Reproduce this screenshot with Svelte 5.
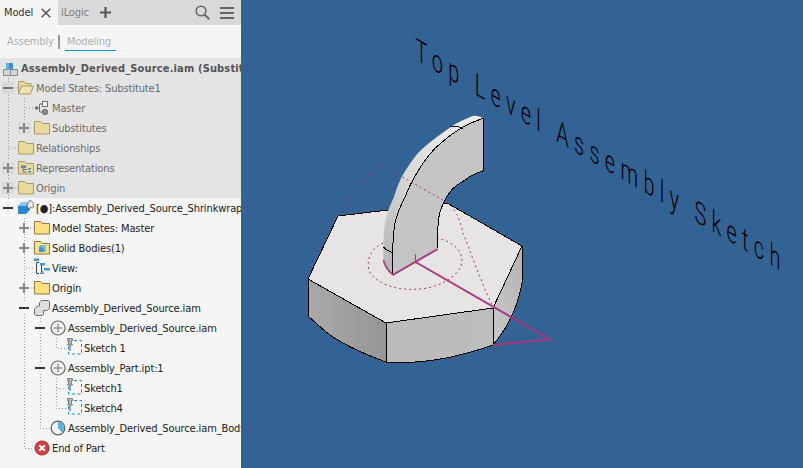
<script>
  const rows = [
    { level: -1, icon: 'asm', text: 'Assembly_Derived_Source.iam (Substitute1)', dim: true, root: true },
    { level: 0, toggle: 'minus', icon: 'open', text: 'Model States: Substitute1', dim: true, boxed: true },
    { level: 1, icon: 'state', text: 'Master', dim: true },
    { level: 1, toggle: 'plus', icon: 'folder', text: 'Substitutes', dim: true, boxed: true },
    { level: 0, icon: 'folder', text: 'Relationships', dim: true },
    { level: 0, toggle: 'plus', icon: 'reps', text: 'Representations', dim: true, boxed: true },
    { level: 0, toggle: 'plus', icon: 'folder', text: 'Origin', dim: true, boxed: true },
    { level: 0, toggle: 'minus', icon: 'part', text: '[●]:Assembly_Derived_Source_Shrinkwrap' },
    { level: 1, toggle: 'plus', icon: 'folder', text: 'Model States: Master' },
    { level: 1, toggle: 'plus', icon: 'solid', text: 'Solid Bodies(1)' },
    { level: 1, icon: 'view', text: 'View:' },
    { level: 1, toggle: 'plus', icon: 'folder', text: 'Origin' },
    { level: 1, toggle: 'minus', icon: 'derived', text: 'Assembly_Derived_Source.iam' },
    { level: 2, toggle: 'minus', icon: 'occ', text: 'Assembly_Derived_Source.iam' },
    { level: 3, icon: 'sketch', text: 'Sketch 1' },
    { level: 2, toggle: 'minus', icon: 'occ', text: 'Assembly_Part.ipt:1' },
    { level: 3, icon: 'sketch', text: 'Sketch1' },
    { level: 3, icon: 'sketch', text: 'Sketch4' },
    { level: 2, icon: 'body', text: 'Assembly_Derived_Source.iam_Body' },
    { level: 1, icon: 'end', text: 'End of Part' }
  ];
</script>

{#snippet folderShape(fill, edge)}
  <path d="M.5 14V1.500h6l2 2h7V14z" fill={fill} stroke={edge} />
{/snippet}

{#snippet icon(name, dim)}
  <svg class="ico" viewBox="0 0 16 16" width="16" height="16">
    {#if name === 'folder' || name === 'reps' || name === 'solid'}
      {@render folderShape(dim ? '#e9d99c' : '#fbe07f', dim ? '#ab9c6a' : '#8f7d43')}
      {#if name === 'reps'}
        <path d="M3 5.500h5v2.500H3zM10 8h3v1.600h-3zM10 11h3v1.600h-3z" fill="#5d86ad" />
        <path d="M5 8v4h3M5 9.500h4" fill="none" stroke="#66788c" />
      {/if}
      {#if name === 'solid'}
        <path d="M5 7l2-2h5v5l-2 2H5z" fill="#3f97d6" />
        <path d="M7 5h5v5H9.500V7.500H7z" fill="#7dc0ea" />
      {/if}
    {:else if name === 'open'}
      <path d="M.5 14V1.500h5.500l2 2h5v2" fill="#e9d99c" stroke="#ab9c6a" />
      <path d="M.5 14L3.500 6h12l-3 8z" fill="#efe2ae" stroke="#ab9c6a" />
    {:else if name === 'asm'}
      <path d="M.5 9.500h7v6h-7zM7.500 9.500h7v6h-7z" fill="#d6d6d6" stroke="#8b8b8b" />
      <path d="M3 3h7v6.500H3z" fill="#6aaee0" />
      <path d="M6 3h4v6.500H6z" fill="#3d8dc9" />
    {:else if name === 'state'}
      <rect x="8.500" y="1.500" width="5" height="5" fill="#fff" stroke="#6f6f6f" />
      <circle cx="11" cy="12" r="2.700" fill="#8c8c8c" stroke="#6f6f6f" />
      <path d="M8 4H5.500v8H8M5.500 8H1" fill="none" stroke="#6f6f6f" />
      <rect x="1" y="6.500" width="3" height="3" fill="#6f6f6f" />
    {:else if name === 'part'}
      <path d="M0 6l4-4h8v8l-4 4H0z" fill="#2d86cf" />
      <path d="M0 6l4-4h8l-4 4z" fill="#8cc7ef" />
      <path d="M9 5l3-5 4 3.500-1 1 .5 2.500-1 1-2.500-.5-1.500 1.500z" fill="#eee" stroke="#5c5c5c" stroke-width=".8" />
    {:else if name === 'view'}
      <path d="M5 2.500H2.500v11H5M7.500 4v8h2" fill="none" stroke="#444" />
      <rect x="0" y="-1.500" width="5" height="2.500" fill="#3d9ae0" />
      <rect x="6" y="3" width="5" height="2.500" fill="#3d9ae0" />
      <rect x="10" y="8" width="6" height="2.500" fill="#3d9ae0" />
      <rect x="6" y="12.500" width="4" height="1.500" fill="#3d9ae0" />
    {:else if name === 'derived'}
      <path d="M.5 9l3-3h2V2.500l2-2h7l1 1v7l-2 2h-4v4l-1 1H2l-1.500-1.500z" fill="#dedede" stroke="#6e6e6e" />
    {:else if name === 'occ'}
      <circle cx="8" cy="8" r="7" fill="#f5f5f5" stroke="#666" stroke-width="1.200" />
      <path d="M3.500 8h9M8 3.500v9" stroke="#666" fill="none" />
    {:else if name === 'sketch'}
      <rect x="2.500" y=".5" width="13" height="13.500" fill="none" stroke="#1f8ce0" stroke-dasharray="3 2.500" />
      <path d="M1.500-1.500h5v2H5.500v3l1 1.500h-5l1-1.500v-3h-1z" fill="#b5b5b5" stroke="#6d6d6d" stroke-width=".8" />
      <path d="M4 5v6" stroke="#555" />
    {:else if name === 'body'}
      <circle cx="8" cy="8" r="6.800" fill="#f2f2f2" stroke="#5d5d5d" stroke-width="1.200" />
      <path d="M8 2a6 6 0 0 1 6 6 6 6 0 0 1-2 4.400L8 8z" fill="#56b1e6" />
    {:else if name === 'end'}
      <circle cx="8" cy="8" r="7" fill="#dc3c3c" stroke="#b32222" />
      <path d="M5.200 5.200l5.600 5.600M10.800 5.200l-5.600 5.600" stroke="#fff" stroke-width="2.200" />
    {/if}
  </svg>
{/snippet}

<div class="app">
  <aside class="side">
    <div class="tabs">
      <div class="tab active">
        <span class="tname">Model</span>
        <svg class="x" viewBox="0 0 10 10" width="10" height="10"><path d="M.7.7l8.600 8.600M9.300.7L.7 9.300" stroke="#555" stroke-width="1.500" /></svg>
      </div>
      <div class="tab ilogic">iLogic</div>
      <svg class="plus" viewBox="0 0 10 10" width="11" height="11"><path d="M5 0v10M0 5h10" stroke="#555" stroke-width="2" /></svg>
      <div class="tools">
        <svg viewBox="0 0 15 15" width="15" height="15"><circle cx="6" cy="6" r="4.800" fill="none" stroke="#666" stroke-width="1.600" /><path d="M9.500 9.500l4.700 4.700" stroke="#666" stroke-width="2" /></svg>
        <svg viewBox="0 0 14 12" width="14" height="12"><path d="M0 1h14M0 6h14M0 11h14" stroke="#666" stroke-width="2" /></svg>
      </div>
    </div>
    <div class="views">
      <span class="vname">Assembly</span>
      <i class="sep"></i>
      <span class="cur">Modeling</span>
    </div>
    <div class="tree">
      {#each rows as r}
        <div class="row" class:dim={r.dim} class:root={r.root} style:padding-left={r.root ? '3px' : `${r.level * 16}px`}>
          {#if !r.root}
            <span class="tog" class:boxed={r.boxed}>
              {#if r.toggle}
                <svg viewBox="0 0 10 10" width="10" height="10">
                  <path d={r.toggle === 'plus' ? 'M0 5h10M5 0v10' : 'M0 5h10'} stroke={r.toggle === 'plus' ? '#888' : (r.dim ? '#777' : '#333')} stroke-width="2" />
                </svg>
              {/if}
            </span>
          {/if}
          {@render icon(r.icon, r.dim)}
          <span class="lbl">{r.text}</span>
        </div>
      {/each}
      <svg class="lines" viewBox="0 58 241 410" width="241" height="410">
        <g fill="none" stroke="#9c9c9c" stroke-dasharray="1 2">
          <path d="M8.500 78v5M8.500 95v66M8.500 175v6M8.500 195v6M14 88h4M14 168h4M14 188h4M9 148h9" />
          <path d="M24.500 98v24M26 108h8M30 128h4" />
          <path d="M24.500 218v4M24.500 234v8M24.500 254v28M24.500 294v8M24.500 314v134.500H34M30 228h4M30 248h4M26 268h8M30 288h4" />
          <path d="M40.500 318v4M40.500 334v28M40.500 374v54.500H50" />
          <path d="M56.500 338v10.500H66M56.500 378v30.500H66M56.500 388.500H66" />
        </g>
      </svg>
    </div>
  </aside>

  <main class="view">
    <svg viewBox="241 0 562 468" width="562" height="468">
      <defs>
        <linearGradient id="arch" gradientUnits="userSpaceOnUse" x1="386" y1="262" x2="440" y2="125">
          <stop offset="0" stop-color="#b8b8b8" />
          <stop offset=".3" stop-color="#c6c6c6" />
          <stop offset=".6" stop-color="#d8d8d8" />
          <stop offset="1" stop-color="#eaeaea" />
        </linearGradient>
        <linearGradient id="leftf" x1="0" y1="0" x2="1" y2="0">
          <stop offset="0" stop-color="#a9a9a9" />
          <stop offset="1" stop-color="#969696" />
        </linearGradient>
        <linearGradient id="midf" x1="0" y1="0" x2="1" y2="0">
          <stop offset="0" stop-color="#bcbcbc" />
          <stop offset="1" stop-color="#bdbdbd" />
        </linearGradient>
        <linearGradient id="rightf" x1="0" y1="1" x2="1" y2="0">
          <stop offset="0" stop-color="#c8c8c8" />
          <stop offset="1" stop-color="#b4b4b4" />
        </linearGradient>
      </defs>

      <text class="note" transform="matrix(.64 .37 0 1 415.500 59.700)" textLength="570" lengthAdjust="spacing">Top Level Assembly Sketch</text>

      <g stroke="#000" stroke-width="1" shape-rendering="crispEdges">
        <path d="M308 279L386 323V362Q345 347 326 332L308 316Z" fill="url(#leftf)" />
        <path d="M386 323L493 308V345Q450 360 415 362Q400 363 386 362Z" fill="url(#midf)" />
        <path d="M493 308L522 246V283Q516 318 493 345Z" fill="url(#rightf)" />
        <path d="M338 216L447 203L522 246L493 308L386 323L308 279Z" fill="#e6e5e4" />
      </g>

      <path d="M383.300 260V250C383.300 240 383.800 231 385 223C386.800 213 390 205 394 197C396 189 399 183 401.700 176.700C407 168 412 160 418 153C426 145 436 137 446.700 130C453 125 460 121 468 118C470 116.500 473 115.500 475 115.700C478 115.800 481 116.800 483.300 118.300L392.700 275C388 272 384 267 383.300 260Z" fill="url(#arch)" />
      <path d="M392.700 275V252C393 240 393.500 232 395 223C397 213 401 205 405 197C408.500 188 412 181 416.700 173.300C422 164 428 156 435 148.300C442 142 450 135 458.300 130C466 125 475 121 483.300 118.300V170.700C476 173 470 176 465 180C460 183 455 186 451.700 190C448 194 445.500 198 443.300 203.300C441 208 439 214 438.300 220C437.800 228 437.700 238 437.700 248.300Z" fill="#c4c4c4" />
      <g fill="none" stroke="#000" shape-rendering="crispEdges">
        <path d="M392.700 275V252C393 240 393.500 232 395 223C397 213 401 205 405 197C408.500 188 412 181 416.700 173.300C422 164 428 156 435 148.300C442 142 450 135 458.300 130C466 125 475 121 483.300 118.300V170.700C476 173 470 176 465 180C460 183 455 186 451.700 190C448 194 445.500 198 443.300 203.300C441 208 439 214 438.300 220C437.800 228 437.700 238 437.700 248.300" />
        <path d="M383.300 246.700C384.500 249 388 251 392.700 252.700M450 127C454 125.500 460 126.500 463 129" />
      </g>

      <g fill="none" stroke="#a8377f">
        <g stroke-width="1" stroke-dasharray="2 3">
          <path d="M338.500 216L377.300 162.500L447 202.500" />
          <path d="M447 202.500Q458 210 463 233C470 250 480 280 493 307" />
          <path d="M383 243C372 248 366 258 369 271C376 284 398 291 417 289C436 289 456 278 461 266C465 252 455 243 438 238" />
          <path d="M450 359h7" />
        </g>
        <path d="M383.500 260Q385 268 393 275" stroke-width="1.500" />
        <path d="M392.700 275L437.700 249M415.500 262L550 339.500L493 345" stroke-width="2" />
        <path d="M415.500 254V262" stroke-width="1" />
      </g>
    </svg>
  </main>
</div>

<style>
  :global(body) {
    margin: 0;
    overflow: hidden;
  }
  .app {
    display: flex;
    width: 803px;
    height: 468px;
    overflow: hidden;
    font-family: "DejaVu Sans", "Noto Sans", sans-serif;
    font-stretch: condensed;
    font-size: 11px;
    letter-spacing: -0.12px;
  }
  .side {
    width: 241px;
    flex: none;
    background: #f5f5f5;
    overflow: hidden;
  }
  .tabs {
    display: flex;
    align-items: center;
    height: 25px;
    background: #d9d9d9;
  }
  .tab {
    display: flex;
    align-items: center;
    height: 100%;
    box-sizing: border-box;
  }
  .tab.active {
    width: 58px;
    padding-left: 4px;
    background: #f5f5f5;
    color: #333;
  }
  .tname {
    width: 37px;
  }
  .tab.ilogic {
    padding-left: 3px;
    color: #808080;
  }
  .plus {
    margin-left: 11px;
  }
  .tools {
    margin-left: auto;
    margin-right: 7px;
    display: flex;
    align-items: center;
    gap: 10px;
  }
  .views {
    display: flex;
    align-items: center;
    height: 33px;
    padding: 0 0 0 7px;
    box-sizing: border-box;
    color: #b0b0b0;
  }
  .vname {
    width: 51px;
  }
  .sep {
    width: 2px;
    height: 14px;
    background: #9a9a9a;
    margin: 0 7px 0 0;
  }
  .cur {
    padding: 0 5px 0 2px;
    margin-left: -2px;
    border-bottom: 1px solid #0696d7;
    line-height: 16px;
    margin-top: 2px;
  }
  .tree {
    position: relative;
  }
  .row {
    display: flex;
    align-items: center;
    height: 20px;
    white-space: nowrap;
    overflow: hidden;
    color: #222;
  }
  .row.dim {
    background: #e4e4e4;
    color: #6b6b6b;
  }
  .row.root {
    font-weight: 700;
    letter-spacing: 0.15px;
    color: #555;
  }
  .tog {
    flex: none;
    display: flex;
    align-items: center;
    justify-content: center;
    width: 16px;
    height: 16px;
    margin-right: 2px;
  }
  .tog svg {
    display: block;
  }
  .tog.boxed {
    background: #dadada;
    width: 12px;
    height: 12px;
    margin: 0 4px 0 2px;
  }
  .ico {
    flex: none;
    display: block;
    overflow: visible;
  }
  .lbl {
    margin-left: 2px;
  }
  .lines {
    position: absolute;
    top: 0;
    left: 0;
    pointer-events: none;
  }
  .view {
    flex: 1;
    background: #336394;
    overflow: hidden;
  }
  .view svg {
    display: block;
  }
  .note {
    font-family: Roboto, "Liberation Sans", sans-serif;
    font-stretch: normal;
    font-weight: 300;
    letter-spacing: 0;
    font-size: 31px;
    fill: #000;
  }
</style>
